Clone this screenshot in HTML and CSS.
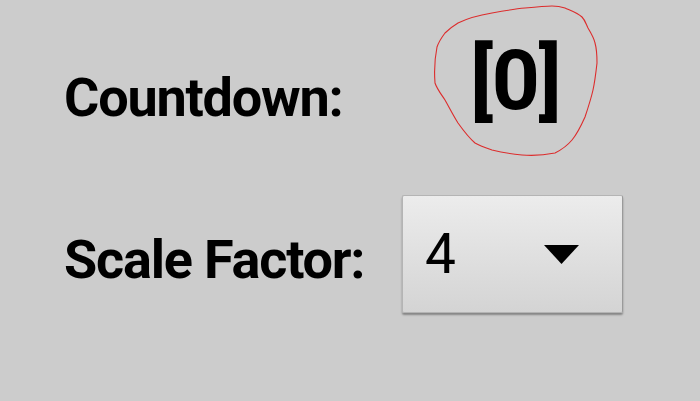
FILE: index.html
```html
<!DOCTYPE html>
<html>
<head>
<meta charset="utf-8">
<link rel="stylesheet" href="styles.css">
</head>
<body>
<div class="panel">
  <div class="row row-count">
    <div class="label">Countdown:</div>
    <div class="value count">[0]</div>
  </div>
  <div class="row row-scale">
    <div class="label">Scale Factor:</div>
    <div class="select">
      <span class="select-value">4</span>
      <svg class="caret" width="35" height="19" viewBox="0 0 35 19"><polygon points="0,0 35,0 17.5,19" fill="#000"/></svg>
    </div>
  </div>
  <svg class="scribble" width="700" height="401" viewBox="0 0 700 401">
    <path d="M525,8 C535,7 545,6 552,6 C558,6 562,7 565,8 C572,11 578,13 582,17 C585,20 586,24 588,28 C591,33 594,38 595,43 C597,50 597,56 597,63 C596,72 595,81 593,90 C591,99 588,108 585,117 C581,126 577,134 572,140 C567,146 561,150 555,153 C545,155 533,156 522,155 C511,154 500,152 492,150 C486,148 480,146 475,143 C468,137 463,130 458,123 C453,115 449,107 445,100 C441,94 437,89 435,83 C434,70 435,57 437,47 C439,41 442,37 445,33 C449,29 453,26 458,23 C468,18 480,15 492,13 C503,11 514,9 525,8 Z" fill="none" stroke="#dc2c2c" stroke-width="1.1"/>
  </svg>
</div>
</body>
</html>
```
FILE: styles.css
```css
html, body {
  margin: 0;
  padding: 0;
  background: #cccccc;
}
body {
  width: 700px;
  height: 401px;
  overflow: hidden;
  font-family: Roboto, "Liberation Sans", sans-serif;
  color: #000;
}
.panel {
  position: relative;
  width: 700px;
  height: 401px;
  padding: 0 0 0 64px;
  box-sizing: border-box;
}
.row {
  display: flex;
  align-items: center;
}
.row-count {
  height: 195px;
}
.label {
  width: 338px;
  font-weight: 700;
  font-size: 54px;
  line-height: 1;
  letter-spacing: -1.2px;
}
.row-scale .label {
  padding-top: 12px;
}
.count {
  font-weight: 700;
  font-size: 84px;
  line-height: 1;
  letter-spacing: -1.5px;
  margin-left: 68px;
  margin-bottom: 34px;
}
.select {
  box-sizing: border-box;
  width: 221px;
  height: 118px;
  display: flex;
  align-items: center;
  justify-content: space-between;
  padding: 0 43px 0 22px;
  border: 1px solid #b4b4b4;
  border-right-color: #9a9a9a;
  border-radius: 2px;
  background: linear-gradient(#ececec, #d4d4d4);
  box-shadow: 0 2px 2px rgba(0,0,0,0.35);
}
.select-value {
  font-size: 55px;
  line-height: 1;
}
.scribble {
  position: absolute;
  left: 0;
  top: 0;
  pointer-events: none;
}
```
